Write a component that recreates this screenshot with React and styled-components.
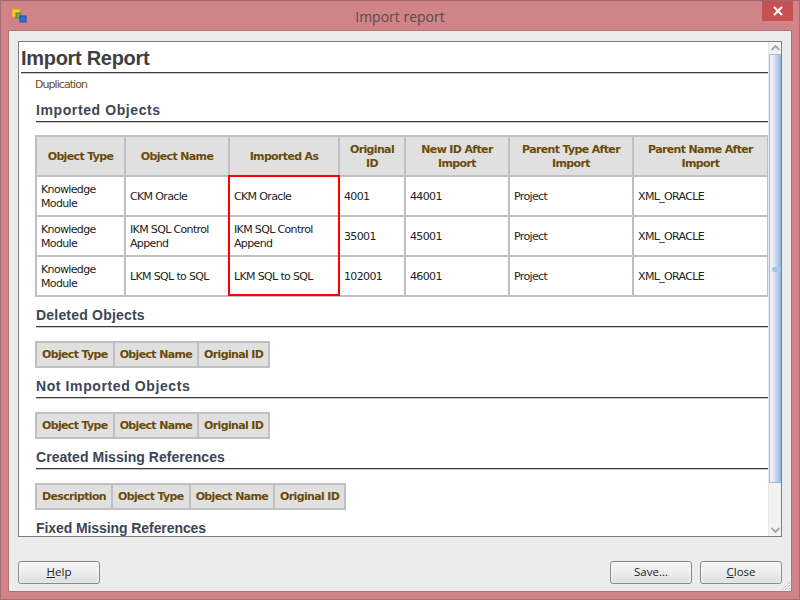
import React from "react";
import styled, { createGlobalStyle } from "styled-components";

const Global = createGlobalStyle`
  html, body { margin: 0; padding: 0; width: 800px; height: 600px; overflow: hidden; }
  #root { width: 800px; height: 600px; }
  * { box-sizing: border-box; }
`;

const Win = styled.div`
  width: 800px; height: 600px; background: #d18488;
  border: 1px solid #a86c70; border-top-color: #a0686c;
  display: flex; flex-direction: column; position: relative;
  font-family: Tahoma, "DejaVu Sans", sans-serif;
`;
const TitleBar = styled.div`
  height: 29px; flex: none; display: flex; align-items: center; justify-content: center; position: relative;
`;
const TitleText = styled.div`
  font: 14px "Open Sans", sans-serif; color: #5a4a4b; margin-top: 1px;
`;
const AppIcon = styled.svg`
  position: absolute; left: 10px; top: 7px;
`;
const CloseBtn = styled.div`
  position: absolute; right: 6px; top: 0; width: 31px; height: 20px; background: #c75050;
  display: flex; align-items: center; justify-content: center;
`;
const Panel = styled.div`
  flex: 1; margin: 0 7px 7px 7px; background: #ececec; border: 1px solid #b27376;
  padding: 10px 9px 7px 9px; display: flex; flex-direction: column; position: relative;
`;
const ReportBox = styled.div`
  height: 496px; flex: none; background: #fff; border: 1px solid #7e7e7e; display: flex; overflow: hidden;
`;
const Content = styled.div`
  flex: 1; min-width: 0; overflow: hidden; padding: 0 0 0 2px;
`;
const H1 = styled.div`
  font: bold 20px/33px "Liberation Sans", sans-serif; color: #3f3f3f; letter-spacing: -0.3px;
  border-bottom: 1px solid #3c3c3c; box-shadow: 0 1px 0 #c8c8c8; height: 31px;
  width: 747px;
`;
const Dup = styled.div`
  font: 11px/14px "DejaVu Sans", sans-serif; letter-spacing: -0.95px; color: #6f4f12; margin: 5px 0 0 14px;
`;
const Section = styled.div`
  margin-left: 15px; width: 732px;
`;
const H2 = styled.div`
  font: bold 14px/20px "Liberation Sans", sans-serif; color: #3b4656; height: 22px;
  letter-spacing: ${p => p.$track}px;
  border-bottom: 1px solid #3c3c3c; box-shadow: 0 1px 0 #c8c8c8;
  margin-top: ${p => p.$top}px;
`;
const Table = styled.table`
  border-collapse: collapse; table-layout: ${p => (p.$fixed ? "fixed" : "auto")};
  width: ${p => (p.$fixed ? "732px" : "auto")};
  margin: ${p => p.$top}px 0 0 -1px; border: 2px solid #c0c0c0;
`;
const Th = styled.th`
  background: #e0e0e0; border: 2px solid #c0c0c0; color: #6b4a08; text-align: center;
  font: bold 11px/14px "DejaVu Sans", sans-serif; letter-spacing: -0.65px;
  padding: ${p => (p.$nowrap ? 0 : 1)}px 5px 0; height: ${p => p.$h}px; white-space: ${p => (p.$nowrap ? "nowrap" : "normal")};
`;
const Td = styled.td`
  border: 2px solid #c0c0c0; color: #222;
  font: 11px/14px "DejaVu Sans", sans-serif; letter-spacing: -0.65px;
  padding: 1px 4px 0; height: 40px; text-align: left;
`;
const TableWrap = styled.div`
  position: relative; margin-top: 13px;
`;
const Highlight = styled.div`
  position: absolute; left: 192px; top: 40px; width: 112px; height: 121px; border: 2px solid #f00; pointer-events: none;
`;
const Col = styled.col`
  width: ${p => p.$w}px;
`;
const Scrollbar = styled.div`
  width: 13px; flex: none; background: #f2f2f2; border-left: 1px solid #e6e6e6; display: flex; flex-direction: column; align-items: stretch;
`;
const ScrollArrow = styled.div`
  height: 12px; flex: none; display: flex; align-items: center; justify-content: center; background: #f3f3f3;
`;
const Thumb = styled.div`
  height: 429px; flex: none; border: 1px solid #9dbbdc;
  background: linear-gradient(90deg, #f4f7fb 0%, #dfe8f3 35%, #b7cde6 75%, #97b7da 100%);
  position: relative;
`;
const Grip = styled.div`
  width: 9px; height: 5px; background: #a7c6ec; border-radius: 2px; position: absolute; right: -1px; top: 212px;
`;
const Track = styled.div`
  flex: 1;
`;
const Buttons = styled.div`
  display: flex; margin-top: 24px; gap: 8px;
`;
const Spacer = styled.div`
  flex: 1;
`;
const Btn = styled.div`
  width: 82px; height: 23px; border: 1px solid #8a8a8a; border-radius: 3px;
  background: linear-gradient(180deg, #f4f4f4 0%, #ededed 50%, #dcdcdc 100%);
  box-shadow: inset 0 0 3px #fff;
  font: 11.5px/20px "Open Sans", sans-serif; color: #222; text-align: center;
`;
const Grab = styled.svg`
  position: absolute; right: 0; bottom: 0;
`;

const head = ["Object Type", "Object Name", "Imported As", "Original ID", "New ID After Import", "Parent Type After Import", "Parent Name After Import"];
const widths = [89, 104, 110, 66, 104, 124, 135];
const rows = [
  ["Knowledge Module", "CKM Oracle", "CKM Oracle", "4001", "44001"],
  ["Knowledge Module", "IKM SQL Control Append", "IKM SQL Control Append", "35001", "45001"],
  ["Knowledge Module", "LKM SQL to SQL", "LKM SQL to SQL", "102001", "46001"],
];

function Empty({ cols, top }) {
  return (
    <Table $top={top}>
      <thead><tr>{cols.map(c => <Th key={c} $h={25} $nowrap>{c}</Th>)}</tr></thead>
    </Table>
  );
}

const Chevron = ({ down }) => (
  <svg width="9" height="6" viewBox="0 0 9 6">
    <path d={down ? "M0.5 1 L4.5 5 L8.5 1" : "M0.5 5 L4.5 1 L8.5 5"} fill="none" stroke="#a6a6a6" strokeWidth="1.8" />
  </svg>
);

export default function App() {
  const objs = ["Object Type", "Object Name", "Original ID"];
  return (
    <Win>
      <Global />
      <TitleBar>
        <AppIcon width="16" height="16" viewBox="0 0 16 16">
          <rect x="1" y="1" width="8" height="8" fill="#f7c93c" stroke="#d99a1c" />
          <rect x="5" y="5" width="5" height="5" fill="#6bb04a" stroke="#4b8a35" />
          <rect x="9" y="8" width="6" height="6" fill="#2f6fdc" stroke="#1d4fa8" />
        </AppIcon>
        <TitleText>Import report</TitleText>
        <CloseBtn>
          <svg width="10" height="10" viewBox="0 0 10 10">
            <path d="M1 1 L9 9 M9 1 L1 9" stroke="#fff" strokeWidth="2" />
          </svg>
        </CloseBtn>
      </TitleBar>
      <Panel>
        <ReportBox>
          <Content>
            <H1>Import Report</H1>
            <Dup>Duplication</Dup>
            <Section>
              <H2 $top={8} $track={0.6}>Imported Objects</H2>
              <TableWrap>
                <Table $fixed $top={0}>
                  <colgroup>{widths.map((w, i) => <Col key={i} $w={w} />)}</colgroup>
                  <thead><tr>{head.map(h => <Th key={h} $h={40}>{h}</Th>)}</tr></thead>
                  <tbody>
                    {rows.map((r, i) => (
                      <tr key={i}>
                        {r.map((c, j) => <Td key={j}>{c}</Td>)}
                        <Td>Project</Td>
                        <Td>XML_ORACLE</Td>
                      </tr>
                    ))}
                  </tbody>
                </Table>
                <Highlight />
              </TableWrap>
              <H2 $top={8} $track={0.2}>Deleted Objects</H2>
              <Empty cols={objs} top={14} />
              <H2 $top={8} $track={0.6}>Not Imported Objects</H2>
              <Empty cols={objs} top={14} />
              <H2 $top={8} $track={0.05}>Created Missing References</H2>
              <Empty cols={["Description", ...objs]} top={14} />
              <H2 $top={8} $track={-0.08}>Fixed Missing References</H2>
            </Section>
          </Content>
          <Scrollbar>
            <ScrollArrow><Chevron /></ScrollArrow>
            <Thumb><Grip /></Thumb>
            <Track />
            <ScrollArrow><Chevron down /></ScrollArrow>
          </Scrollbar>
        </ReportBox>
        <Buttons>
          <Btn><u>H</u>elp</Btn>
          <Spacer />
          <Btn>Save...</Btn>
          <Btn><u>C</u>lose</Btn>
        </Buttons>
        <Grab width="10" height="10" viewBox="0 0 10 10">
          <path d="M9 1 L1 9 M9 4 L4 9 M9 7 L7 9" stroke="#a8a8a8" strokeWidth="1" strokeDasharray="1 1" />
        </Grab>
      </Panel>
    </Win>
  );
}
